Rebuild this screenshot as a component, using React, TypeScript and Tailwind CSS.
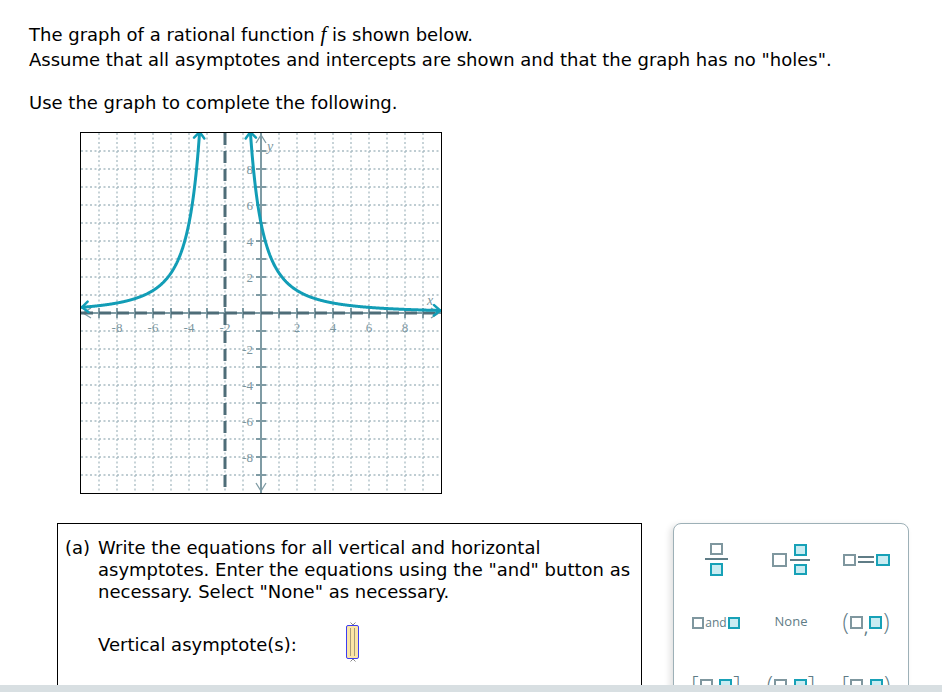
import React from "react";

const U = 18;
const f = (x: number) => 20 / ((x + 2) * (x + 2));
const fp = (x: number) => -40 / Math.pow(x + 2, 3);
const sx = (x: number) => 180 + x * U;
const sy = (y: number) => 180 - y * U;

function branch(x0: number, x1: number, n = 500) {
  let d = "";
  for (let i = 0; i <= n; i++) {
    const x = x0 + ((x1 - x0) * i) / n;
    d += (i === 0 ? "M" : "L") + sx(x).toFixed(2) + " " + sy(f(x)).toFixed(2) + " ";
  }
  return d;
}

function chevron(x: number, sign: number, len = 8, ang = 0.7) {
  const tx = sx(x);
  const ty = sy(f(x));
  let dx = sign * U;
  let dy = -sign * fp(x) * U;
  const m = Math.hypot(dx, dy);
  dx /= m;
  dy /= m;
  const arm = (a: number) => {
    const c = Math.cos(a);
    const s = Math.sin(a);
    const rx = dx * c - dy * s;
    const ry = dx * s + dy * c;
    return [tx - rx * len, ty - ry * len];
  };
  const [ax, ay] = arm(ang);
  const [bx, by] = arm(-ang);
  return `M${ax.toFixed(2)} ${ay.toFixed(2)} L${tx.toFixed(2)} ${ty.toFixed(2)} L${bx.toFixed(2)} ${by.toFixed(2)}`;
}

const GRID = "#a9bcc3";
const AXIS = "#7f9ba4";
const DASH = "#4e6d78";
const TEAL = "#129db6";
const LBL = "#7b959e";

function Graph() {
  const xl = -2 - Math.SQRT2 + 0.004;
  const xr = -2 + Math.SQRT2 - 0.004;
  const units: number[] = [];
  for (let i = -9; i <= 9; i++) units.push(i);
  const evens = [-8, -6, -4, -2, 2, 4, 6, 8];
  return (
    <svg width="360" height="360" viewBox="0 0 360 360" className="block">
      {units.map((i) => (
        <g key={"g" + i}>
          <line x1={sx(i)} y1={0} x2={sx(i)} y2={360} stroke={GRID} strokeWidth={1.3} strokeDasharray="2 2.5" />
          <line x1={0} y1={sy(i)} x2={360} y2={sy(i)} stroke={GRID} strokeWidth={1.3} strokeDasharray="2 2.5" />
        </g>
      ))}
      <line x1={0} y1={180} x2={360} y2={180} stroke={AXIS} strokeWidth={2} />
      <line x1={180} y1={0} x2={180} y2={360} stroke={AXIS} strokeWidth={2} />
      {units
        .filter((i) => i !== 0)
        .map((i) => (
          <g key={"t" + i}>
            <line x1={sx(i)} y1={175} x2={sx(i)} y2={185} stroke={AXIS} strokeWidth={2} />
            <line x1={175} y1={sy(i)} x2={185} y2={sy(i)} stroke={AXIS} strokeWidth={2} />
          </g>
        ))}
      <path d="M175 10 L180 2 L185 10" fill="none" stroke={AXIS} strokeWidth={1.3} />
      <path d="M175 350 L180 358 L185 350" fill="none" stroke={AXIS} strokeWidth={1.3} />
      <path d="M10 175 L2 180 L10 185" fill="none" stroke={AXIS} strokeWidth={1.3} />
      <path d="M350 175 L358 180 L350 185" fill="none" stroke={AXIS} strokeWidth={1.3} />
      {evens.map((v) => (
        <text
          key={"xl" + v}
          x={sx(v)}
          y={199}
          textAnchor="middle"
          fontFamily="'Liberation Serif', serif"
          fontSize={13}
          fill={LBL}
        >
          {v < 0 ? "-" + -v : String(v)}
        </text>
      ))}
      {evens.map((v) => (
        <text
          key={"yl" + v}
          x={172}
          y={sy(v) + 4.5}
          textAnchor="end"
          fontFamily="'Liberation Serif', serif"
          fontSize={13}
          fill={LBL}
        >
          {v < 0 ? "-" + -v : String(v)}
        </text>
      ))}
      <text x={346} y={172} fontFamily="'Liberation Serif', serif" fontStyle="italic" fontSize={14} fill={LBL}>
        x
      </text>
      <text x={186} y={18} fontFamily="'Liberation Serif', serif" fontStyle="italic" fontSize={14} fill={LBL}>
        y
      </text>
      <line x1={0} y1={180} x2={360} y2={180} stroke={DASH} strokeWidth={3} strokeDasharray="12 6" />
      <line x1={144} y1={0} x2={144} y2={360} stroke={DASH} strokeWidth={3} strokeDasharray="12 6" />
      <path d={branch(-9.95, xl)} fill="none" stroke={TEAL} strokeWidth={3} strokeLinecap="round" />
      <path d={branch(xr, 9.95)} fill="none" stroke={TEAL} strokeWidth={3} strokeLinecap="round" />
      <path d={chevron(xl, 1)} fill="none" stroke={TEAL} strokeWidth={2.5} strokeLinecap="round" strokeLinejoin="round" />
      <path d={chevron(xr, -1)} fill="none" stroke={TEAL} strokeWidth={2.5} strokeLinecap="round" strokeLinejoin="round" />
      <path d={chevron(-9.95, -1)} fill="none" stroke={TEAL} strokeWidth={2.5} strokeLinecap="round" strokeLinejoin="round" />
      <path d={chevron(9.95, 1)} fill="none" stroke={TEAL} strokeWidth={2.5} strokeLinecap="round" strokeLinejoin="round" />
    </svg>
  );
}

function GSq({ w = 13, h = 13 }: { w?: number; h?: number }) {
  return <span className="inline-block border-2 border-[#7f979f] bg-white" style={{ width: w, height: h }} />;
}
function TSq({ w = 13, h = 13 }: { w?: number; h?: number }) {
  return <span className="inline-block border-2 border-[#17a1b7] bg-[#c9ecf2]" style={{ width: w, height: h }} />;
}

const KEY = "text-[#5f7c86] font-['Open_Sans',sans-serif]";

function Pair({ l, r }: { l: string; r: string }) {
  return (
    <div className={"flex items-center " + KEY}>
      <span className="text-[23px] leading-none font-light mr-[1px] relative -top-[1px]">{l}</span>
      <GSq w={13} h={13} />
      <span className="text-[18px] leading-none relative top-[4px] mx-[1px]">,</span>
      <TSq w={13} h={13} />
      <span className="text-[23px] leading-none font-light ml-[1px] relative -top-[1px]">{r}</span>
    </div>
  );
}

function Keypad() {
  return (
    <div className="w-[236px] h-[200px] rounded-[8px] border border-[#9db0b7] bg-white shadow-[-3px_2px_6px_rgba(0,0,0,0.12)]">
      <div className="grid grid-cols-3 w-[225px] mx-auto pt-[4px]">
        <div className="h-[63px] flex items-center justify-center">
          <div className="flex flex-col items-center">
            <GSq w={13} h={12} />
            <div className="w-[23px] h-[2px] bg-[#5f7c86] my-[3px]" />
            <TSq w={13} h={13} />
          </div>
        </div>
        <div className="h-[63px] flex items-center justify-center">
          <div className="flex items-center gap-[3px]">
            <GSq w={15} h={14} />
            <div className="flex flex-col items-center">
              <TSq w={13} h={12} />
              <div className="w-[20px] h-[2px] bg-[#5f7c86] my-[3px]" />
              <TSq w={13} h={11} />
            </div>
          </div>
        </div>
        <div className="h-[63px] flex items-center justify-center">
          <div className="flex items-center">
            <GSq w={13} h={12} />
            <div className="flex flex-col mx-[2px] gap-[3px]">
              <div className="w-[16px] h-[2px] bg-[#5f7c86]" />
              <div className="w-[16px] h-[2px] bg-[#5f7c86]" />
            </div>
            <TSq w={14} h={12} />
          </div>
        </div>

        <div className="h-[63px] flex items-center justify-center">
          <div className={"flex items-center " + KEY}>
            <GSq w={12} h={12} />
            <span className="text-[12px] leading-none mx-[1px]">and</span>
            <TSq w={12} h={12} />
          </div>
        </div>
        <div className="h-[63px] flex items-center justify-center">
          <span className={"text-[13px] leading-none relative -top-[1px] " + KEY}>None</span>
        </div>
        <div className="h-[63px] flex items-center justify-center">
          <Pair l="(" r=")" />
        </div>

        <div className="h-[63px] flex items-center justify-center">
          <Pair l="[" r="]" />
        </div>
        <div className="h-[63px] flex items-center justify-center">
          <Pair l="(" r="]" />
        </div>
        <div className="h-[63px] flex items-center justify-center">
          <Pair l="[" r=")" />
        </div>
      </div>
    </div>
  );
}

function InputBox() {
  return (
    <div className="relative w-[13px] h-[34px] border border-[#3d3df2] bg-[#fbe5a6] rounded-[2px]">
      <div className="absolute left-[3px] right-[3px] top-[2px] bottom-[2px] border-x border-[#a89a78]" />
      <svg className="absolute left-[3px] -top-[4px]" width="6" height="5" viewBox="0 0 6 5">
        <path d="M0.5 0.5 L3 3 L5.5 0.5" fill="none" stroke="#888" strokeWidth="1" />
      </svg>
      <svg className="absolute left-[3px] -bottom-[4px]" width="6" height="5" viewBox="0 0 6 5">
        <path d="M0.5 4.5 L3 2 L5.5 4.5" fill="none" stroke="#888" strokeWidth="1" />
      </svg>
    </div>
  );
}

export default function App() {
  return (
    <div className="relative w-[942px] h-[692px] overflow-hidden bg-white text-black font-['DejaVu_Sans',Verdana,sans-serif]">
      <div className="pl-[29px] pt-[22px] text-[18px] leading-[25px]">
        <p>
          The graph of a rational function{" "}
          <span className="font-['Liberation_Serif',serif] italic text-[21px] leading-none">f</span> is shown below.
        </p>
        <p>Assume that all asymptotes and intercepts are shown and that the graph has no "holes".</p>
        <p className="mt-[18px]">Use the graph to complete the following.</p>
      </div>

      <div className="ml-[80px] mt-[17px] w-[362px] h-[362px] border border-black">
        <Graph />
      </div>

      <div className="flex items-start mt-[29px]">
        <div className="ml-[57px] w-[585px] h-[200px] border border-black pt-[13px] pl-[7px] text-[18px] leading-[22px]">
          <div className="flex">
            <div className="w-[33px] shrink-0">(a)</div>
            <div>
              <div>Write the equations for all vertical and horizontal</div>
              <div>asymptotes. Enter the equations using the "and" button as</div>
              <div>necessary. Select "None" as necessary.</div>
              <div className="flex items-center h-[34px] mt-[22px]">
                <span className="w-[248px] shrink-0 relative top-[3px]">Vertical asymptote(s):</span>
                <InputBox />
              </div>
            </div>
          </div>
        </div>
        <div className="ml-[31px]">
          <Keypad />
        </div>
      </div>

      <div className="absolute left-0 right-0 bottom-0 h-[7px] bg-[#d8dfe2]" />
    </div>
  );
}
